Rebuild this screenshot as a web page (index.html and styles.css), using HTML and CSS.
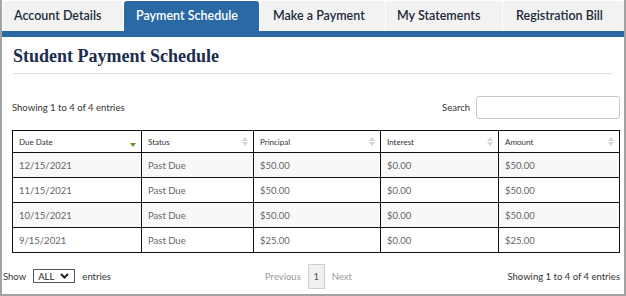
FILE: index.html
```html
<!DOCTYPE html>
<html lang="en">
<head>
    <meta charset="UTF-8">
    <meta name="viewport" content="width=device-width, initial-scale=1.0">
    <title>Payment Schedule</title>
    <link rel="stylesheet" href="styles.css">
</head>
<body>
    <div class="frame">
        <ul class="tabs">
            <li class="tab">Account Details</li>
            <li class="tab active">Payment Schedule</li>
            <li class="tab">Make a Payment</li>
            <li class="tab">My Statements</li>
            <li class="tab">Registration Bill</li>
        </ul>

        <div class="content">
            <h1>Student Payment Schedule</h1>
            <hr class="divider">

            <div class="table-top">
                <div class="info">Showing 1 to 4 of 4 entries</div>
                <label class="search">Search <input type="text"></label>
            </div>

            <table class="schedule">
                <thead>
                    <tr>
                        <th class="sorted">Due Date</th>
                        <th>Status</th>
                        <th>Principal</th>
                        <th>Interest</th>
                        <th>Amount</th>
                    </tr>
                </thead>
                <tbody>
                    <tr>
                        <td>12/15/2021</td><td>Past Due</td><td>$50.00</td><td>$0.00</td><td>$50.00</td>
                    </tr>
                    <tr>
                        <td>11/15/2021</td><td>Past Due</td><td>$50.00</td><td>$0.00</td><td>$50.00</td>
                    </tr>
                    <tr>
                        <td>10/15/2021</td><td>Past Due</td><td>$50.00</td><td>$0.00</td><td>$50.00</td>
                    </tr>
                    <tr>
                        <td>9/15/2021</td><td>Past Due</td><td>$25.00</td><td>$0.00</td><td>$25.00</td>
                    </tr>
                </tbody>
            </table>
        </div>

        <div class="table-bottom">
            <div class="length">
                Show
                <span class="select">ALL
                    <svg width="9" height="6" viewBox="0 0 9 6"><path d="M1 1 L4.5 4.5 L8 1" fill="none" stroke="#222" stroke-width="2"/></svg>
                </span>
                entries
            </div>
            <div class="pager">
                <span class="page-link">Previous</span>
                <span class="page-num">1</span>
                <span class="page-link">Next</span>
            </div>
            <div class="info">Showing 1 to 4 of 4 entries</div>
        </div>
    </div>
</body>
</html>
```

FILE: styles.css
```css
body {
    margin: 0;
    padding: 0;
    font-family: 'Lato', sans-serif;
    background: white;
    color: #333;
}

.frame {
    box-sizing: border-box;
    width: 626px;
    height: 296px;
    border: 2px solid #a3a3a3;
    border-top: none;
    overflow: hidden;
}

.tabs {
    display: flex;
    gap: 1px;
    list-style: none;
    margin: 0;
    padding: 1px 0 0 1px;
    border-bottom: 6px solid #2b69a4;
}

.tab {
    box-sizing: border-box;
    height: 30px;
    line-height: 30px;
    padding-left: 11px;
    background: #f2f2f2;
    color: #1c2b3a;
    font-size: 12.5px;
    font-weight: 600;
    border-radius: 3px 3px 0 0;
}

.tab:nth-child(1) { width: 120px; }
.tab:nth-child(2) { width: 135px; padding-left: 12px; }
.tab:nth-child(3) { width: 125px; padding-left: 13px; }
.tab:nth-child(4) { width: 116px; }
.tab:nth-child(5) { flex: 1; padding-left: 13px; }

.tab.active {
    background: #2b69a4;
    color: white;
}

.content {
    padding: 0 4px 0 10px;
}

h1 {
    margin: 6px 0 0 1px;
    font-family: 'Liberation Serif', serif;
    font-size: 18px;
    font-weight: bold;
    color: #1a2d4c;
    height: 26px;
    line-height: 26px;
}

.divider {
    border: none;
    border-top: 1px solid #dcdcdc;
    margin: 4px 8px 0 1px;
}

.table-top {
    display: flex;
    justify-content: space-between;
    align-items: center;
    margin-top: 21px;
    height: 24px;
}

.info {
    font-size: 9.5px;
    color: #333;
}

.search {
    display: flex;
    align-items: center;
    gap: 6px;
    font-size: 9.5px;
}

.search input {
    box-sizing: border-box;
    width: 144px;
    height: 23px;
    border: 1px solid #c8c8c8;
    border-radius: 3px;
}

.schedule {
    width: 608px;
    margin-top: 11px;
    border-collapse: collapse;
    border: 1px solid #111;
}

.schedule th,
.schedule td {
    border: 1px solid #111;
    text-align: left;
    padding: 0 6px;
}

.schedule th {
    height: 21px;
    font-size: 8px;
    font-weight: normal;
    color: #333;
    position: relative;
}

.schedule th:nth-child(1) { width: 116px; }
.schedule th:nth-child(2) { width: 99px; }
.schedule th:nth-child(3) { width: 114px; }
.schedule th:nth-child(4) { width: 105px; }

/* sort arrows */
.schedule th::before,
.schedule th::after {
    content: '';
    position: absolute;
    right: 5px;
    border-left: 3px solid transparent;
    border-right: 3px solid transparent;
}

.schedule th::before {
    top: 6px;
    border-bottom: 4px solid #d4d4d4;
}

.schedule th::after {
    top: 11px;
    border-top: 4px solid #d4d4d4;
}

.schedule th.sorted::before {
    display: none;
}

.schedule th.sorted::after {
    top: 12px;
    border-top-color: #5e9a1c;
}

.schedule td {
    height: 24px;
    font-size: 9.5px;
    color: #666;
}

.schedule tbody tr:nth-child(odd) {
    background: #f8f8f8;
}

.table-bottom {
    display: flex;
    align-items: center;
    justify-content: space-between;
    padding: 0 4px 0 1px;
    margin-top: 10px;
    height: 26px;
    font-size: 9.5px;
}

.length {
    display: flex;
    align-items: center;
    gap: 7px;
    width: 262px;
}

.select {
    display: inline-flex;
    align-items: center;
    gap: 6px;
    height: 12px;
    padding: 0 5px 0 4px;
    border: 1px solid #555;
    color: #222;
    font-size: 9.5px;
}

.pager {
    display: flex;
    align-items: center;
    gap: 7px;
    color: #999;
    flex: 1;
}

.page-num {
    box-sizing: border-box;
    display: inline-block;
    width: 17px;
    height: 25px;
    line-height: 23px;
    text-align: center;
    background: #f0f0f0;
    border: 1px solid #cfcfcf;
    color: #555;
}
```
